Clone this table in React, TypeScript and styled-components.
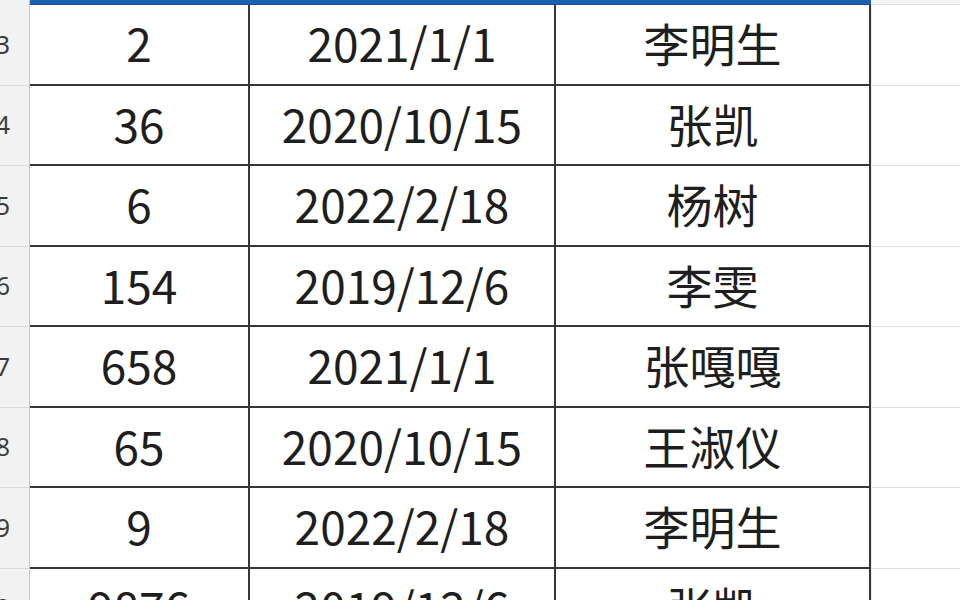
import React from "react";
import styled, { createGlobalStyle } from "styled-components";

const Global = createGlobalStyle`
  html, body { margin: 0; padding: 0; background: #ffffff; overflow: hidden; }
  body { width: 960px; height: 600px; }
`;

const Sheet = styled.div`
  display: grid;
  grid-template-columns: 30px 220px 306px 315px 1fr;
  grid-template-rows: 5px repeat(8, 80.5px);
  width: 960px;
  height: 600px;
  overflow: hidden;
  font-family: "Noto Sans CJK SC", "Noto Sans", sans-serif;
  color: #1e1e1e;
`;

const Corner = styled.div`
  background: #f2f2f2;
  border-right: 1px solid #c8c8c8;
`;

const HeadBand = styled.div`
  background: #1c5fae;
  border-bottom: 1px solid #164e92;
  box-sizing: border-box;
`;

const RestBand = styled.div`
  background: #f3f3f3;
  border-bottom: 1px solid #dedede;
  box-sizing: border-box;
`;

const RowHead = styled.div`
  background: #f2f2f2;
  border-right: 1px solid #c8c8c8;
  border-bottom: 1px solid #dadada;
  box-sizing: border-box;
  display: flex;
  align-items: center;
  justify-content: flex-end;
  padding-right: 19px;
  padding-bottom: 2px;
  overflow: hidden;
  font-family: "Noto Sans", sans-serif;
  font-size: 25px;
  color: #3c3c3c;
`;

const Cell = styled.div`
  border-right: 2px solid #363636;
  border-bottom: 2px solid #363636;
  box-sizing: border-box;
  display: flex;
  align-items: center;
  justify-content: center;
  font-size: 46px;
  line-height: 1;
  white-space: nowrap;
  overflow: hidden;
  padding-bottom: 4px;
`;

const Empty = styled.div`
  border-bottom: 1px solid #dedede;
  border-left: 1px solid #ececec;
  box-sizing: border-box;
`;

const rows: [string, string, string, string][] = [
  ["3", "2", "2021/1/1", "李明生"],
  ["4", "36", "2020/10/15", "张凯"],
  ["5", "6", "2022/2/18", "杨树"],
  ["6", "154", "2019/12/6", "李雯"],
  ["7", "658", "2021/1/1", "张嘎嘎"],
  ["8", "65", "2020/10/15", "王淑仪"],
  ["9", "9", "2022/2/18", "李明生"],
  ["10", "9876", "2019/12/6", "张凯"],
];

export default function App() {
  return (
    <>
      <Global />
      <Sheet>
        <Corner />
        <HeadBand />
        <HeadBand />
        <HeadBand />
        <RestBand />
        {rows.map(([n, a, b, c]) => (
          <React.Fragment key={n}>
            <RowHead>{n}</RowHead>
            <Cell>{a}</Cell>
            <Cell>{b}</Cell>
            <Cell>{c}</Cell>
            <Empty />
          </React.Fragment>
        ))}
      </Sheet>
    </>
  );
}
